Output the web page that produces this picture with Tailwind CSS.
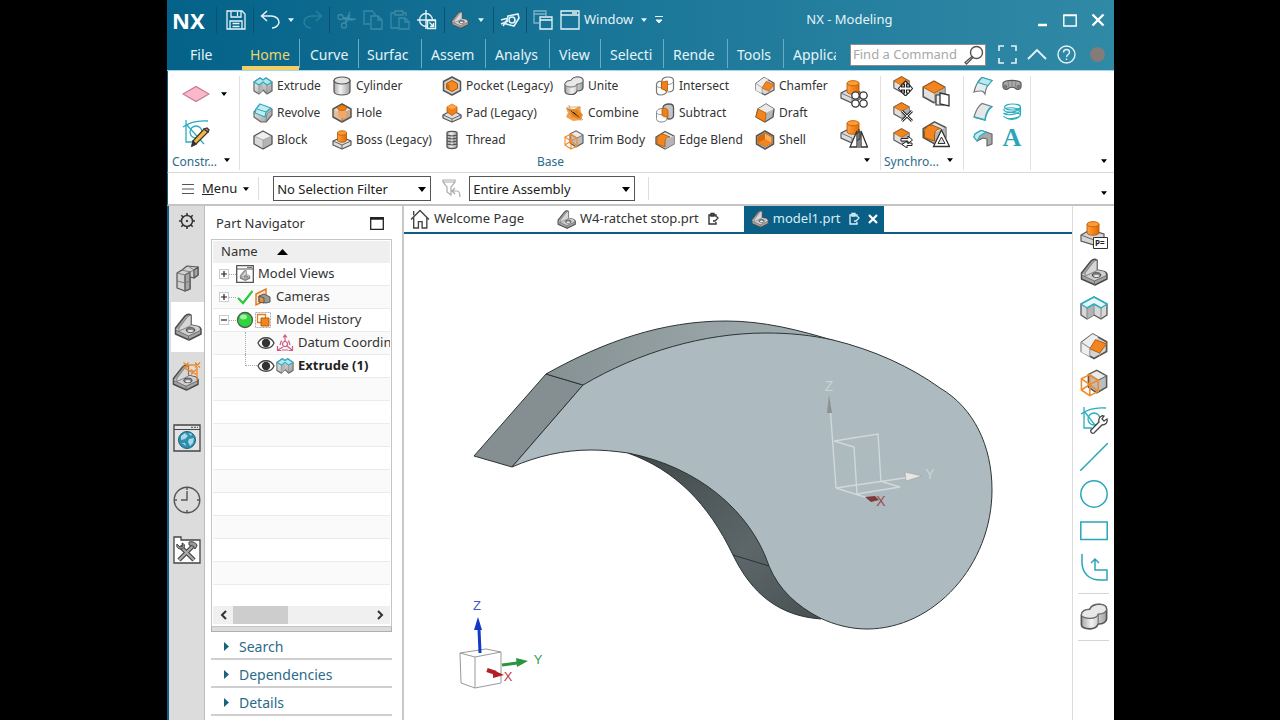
<!DOCTYPE html>
<html lang="en">
<head>
  <meta charset="UTF-8">
  <meta name="viewport" content="width=device-width, initial-scale=1.0">
  <title>NX - Modeling</title>
  <script src="https://cdn.jsdelivr.net/npm/@tailwindcss/browser@4"></script>
</head>
<body class="bg-black pl-[167px] pr-[166px] font-['Noto_Sans','Open_Sans',sans-serif] text-[#333]">

<!-- Icon sprite -->
<svg class="absolute size-0" aria-hidden="true">
  <defs>
    <linearGradient id="metal" x1="0" y1="0" x2="1" y2="1"><stop offset="0" stop-color="#f4f4f4"/><stop offset="1" stop-color="#9b9b9b"/></linearGradient>
    <linearGradient id="cyl" x1="0" x2="1"><stop offset="0" stop-color="#a8a8a8"/><stop offset=".4" stop-color="#f2f2f2"/><stop offset="1" stop-color="#a0a0a0"/></linearGradient>
    <linearGradient id="orange" x1="0" x2="1"><stop offset="0" stop-color="#ffa040"/><stop offset="1" stop-color="#e56a00"/></linearGradient>

    <symbol id="caret" viewBox="0 0 8 5"><path d="M0 0h8L4 5z" fill="currentColor"/></symbol>

    <symbol id="block" viewBox="0 0 20 20">
      <path d="M1 6l9-5 9 5-9 4z" fill="#efefef"/><path d="M1 6l9 4v9l-9-5z" fill="#d9d9d9"/><path d="M19 6l-9 4v9l9-5z" fill="#b4b4b4"/>
      <path d="M1 6l9 4 9-4M10 10v9" fill="none" stroke="#999" stroke-width=".8"/>
      <path d="M1 6l9-5 9 5v8l-9 5-9-5z" fill="none" stroke="#555" stroke-width="1.3" stroke-linejoin="round"/>
    </symbol>
    <symbol id="extrude" viewBox="0 0 20 20">
      <path d="M1 6l6-4 3 2 3-2 6 4v9l-5 3-4-4-4 4-5-3z" fill="url(#metal)" stroke="#666" stroke-width="1.200" stroke-linejoin="round"/>
      <path d="M6 9l4-2v7l-4 4z" fill="#b5b5b5"/><path d="M6 9v9M14 9v9" stroke="#888" stroke-width=".7"/>
      <path d="M1 6l6-4 3 2 3-2 6 4-5 3-4-3-4 3z" fill="#b8e4ec" stroke="#2badc2" stroke-width="1.300" stroke-linejoin="round"/>
    </symbol>
    <symbol id="revolve" viewBox="0 0 20 20">
      <path d="M1 9l5-6 13 3v6l-6 7H8l-7-5z" fill="url(#metal)" stroke="#666" stroke-width="1.200" stroke-linejoin="round"/>
      <path d="M7 1l11 4-5 4-1 5-10-4 1-4z" fill="#c5eaf0" stroke="#2badc2" stroke-width="1.300" stroke-linejoin="round"/>
      <path d="M4 6l9 3M13 9l5-4" stroke="#2badc2" fill="none"/><path d="M13 18l1-7 5-4" stroke="#888" fill="none"/>
    </symbol>
    <symbol id="cylinder" viewBox="0 0 20 20">
      <path d="M2 4.500v11C2 17.500 5.500 19 10 19s8-1.500 8-3.500v-11z" fill="url(#cyl)" stroke="#555" stroke-width="1.200"/>
      <ellipse cx="10" cy="4.500" rx="8" ry="3.500" fill="#e4e4e4" stroke="#555" stroke-width="1.200"/>
    </symbol>
    <symbol id="hole" viewBox="0 0 20 20">
      <path d="M1 6l9-5 9 5-9 4z" fill="#ddd"/><path d="M1 6l9 4v9l-9-5z" fill="#e2c09d"/><path d="M19 6l-9 4v9l9-5z" fill="#cfa681"/>
      <path d="M1 6l9-5 9 5v8l-9 5-9-5z" fill="none" stroke="#555" stroke-width="1.500" stroke-linejoin="round"/>
      <path d="M6 4v9c0 1.500 2 2.500 4 2.500s4-1 4-2.500V4z" fill="#f0a867"/><ellipse cx="10" cy="5" rx="4.500" ry="2.300" fill="#f47f10" stroke="#b85c00" stroke-width=".8"/>
      <path d="M10 15v4" stroke="#9b6a40" stroke-width=".8"/>
    </symbol>
    <symbol id="boss" viewBox="0 0 20 20">
      <path d="M1 11l9-4 9 4v4l-9 4-9-4z" fill="#dedede" stroke="#555" stroke-width="1.200" stroke-linejoin="round"/><path d="M1 11l9 4 9-4M10 15v4" fill="none" stroke="#666"/>
      <path d="M5.500 3v7c0 1.300 2 2.300 4.500 2.300s4.500-1 4.500-2.300V3z" fill="url(#orange)" stroke="#a85400" stroke-width=".8"/><ellipse cx="10" cy="3" rx="4.500" ry="2.200" fill="#ff9a35" stroke="#b85c00" stroke-width=".8"/>
    </symbol>
    <symbol id="pocket" viewBox="0 0 20 20">
      <path d="M10 1l8.500 4.500v9L10 19l-8.500-4.500v-9z" fill="#d2d2d2" stroke="#555" stroke-width="1.500" stroke-linejoin="round"/>
      <path d="M10 4.500l5.500 3v5L10 15.500l-5.500-3v-5z" fill="#f58a24" stroke="#a85400"/><path d="M4.500 7.500v5l3 1.500V9z" fill="#cf6a08"/>
    </symbol>
    <symbol id="pad" viewBox="0 0 20 20">
      <path d="M1 12l9-5 9 5v3l-9 4-9-4z" fill="#dedede" stroke="#555" stroke-width="1.300" stroke-linejoin="round"/><path d="M1 12l9 4 9-4M10 16v3" fill="none" stroke="#666"/>
      <path d="M5 4l5-3 5 3v5l-5 3.500L5 9z" fill="#f08018" stroke="#b85c00" stroke-width=".8"/><path d="M5 4l5 2.500L15 4l-5-3z" fill="#ffa44a"/>
    </symbol>
    <symbol id="thread" viewBox="0 0 20 20">
      <path d="M5 2.500C6 1 14 1 15 2.500V17c-1 2-9 2-10 0z" fill="url(#cyl)" stroke="#555" stroke-width="1.300"/>
      <path d="M5 5q5 2 10 0M5 8q5 2 10 0M5 11q5 2 10 0M5 14q5 2 10 0" fill="none" stroke="#444"/><path d="M8 5v9M12 5v9" stroke="#666" stroke-width=".8"/>
    </symbol>
    <symbol id="unite" viewBox="0 0 20 20">
      <path d="M1 8.500c0-2.500 3-4 6-4 1-2.500 4-3.500 7-3.500s5 1.500 5 3.500v7c0 2-2.500 3.500-6 3.500-1 2.500-3.500 3.500-6 3.500-3.500 0-6-1-6-3z" fill="url(#cyl)" stroke="#555" stroke-width="1.200"/>
      <path d="M1 8.500c0-2.500 3-4 6-4 1-2.500 4-3.500 7-3.500s5 1.500 5 3.500c0 2-2.500 3.500-6 3.500-.500 2-3 3-6 3s-6-1-6-2.500z" fill="#e8e8e8" stroke="#666" stroke-width=".9"/><path d="M13 8v7" stroke="#777" stroke-width=".9"/>
    </symbol>
    <symbol id="combine" viewBox="0 0 20 20">
      <path d="M2 5l8 1 6-3 1 6 2 3-2 5-8 1-7-4 2-4z" fill="#f6a04a"/><path d="M8 6l6 1 4 5-3 4-6-2-3-4z" fill="#ef7d0e"/>
      <path d="M2 5l8 4 9 8M3 12l14-8M5 2l3 13M3 4h12M14 7l3 11" stroke="#c99a5c" stroke-width=".8"/>
    </symbol>
    <symbol id="trim" viewBox="0 0 20 20">
      <path d="M6 4l6-3 7 4v8l-7 4-6-4z" fill="#bdbdbd" stroke="#555" stroke-width="1.100" stroke-linejoin="round"/><path d="M6 4l7 4 6-3-7-4z" fill="#ebebeb" stroke="#666" stroke-width=".8"/>
      <path d="M1 7l6-3 6 4v8l-6 3-6-4zM1 7l6 4 6-3M7 11v8M7 4v7l-6 4M7 11l6 5" fill="none" stroke="#f28a2a" stroke-width="1.100" stroke-linejoin="round"/>
    </symbol>
    <symbol id="intersect" viewBox="0 0 20 20">
      <path d="M1.500 9c0-2.500 2-4 5-4v7c2 1 5 2 5 4-1 2-3 3-6 3-2.500 0-4-1.500-4-3.500zM7 5c0-3 3-4 6-4 4 0 5.500 1.500 5.500 3.500v8c0 2-2 3.500-6 3.500" fill="#fff" stroke="#777" stroke-width="1.200"/>
      <path d="M1.500 9.500c1 3 8 3 11-1 3 0 5-1 6-3" fill="none" stroke="#888" stroke-width=".9"/>
      <path d="M6.500 6l6-1v10l-6-2z" fill="#f08018" stroke="#b85c00" stroke-width=".8"/>
    </symbol>
    <symbol id="subtract" viewBox="0 0 20 20">
      <path d="M8 5c0-3 3-4 6-4 3 0 4.500 1.500 4.500 3.500v8c0 2-2 3.500-5 3.500l-5-2z" fill="#c4c4c4" stroke="#555" stroke-width="1.300"/>
      <path d="M1.500 9.500C1.500 7 4 5.500 7 5.500s5 1 5 3v7c0 2-2 3.500-5.500 3.500s-5-1.500-5-3.500z" fill="#fff" fill-opacity=".8" stroke="#888"/><path d="M1.500 9.500c1 3 9 3 10.500-1" fill="none" stroke="#999"/>
      <path d="M7 5.500c3-1 6 0 6 3v6l-6-2z" fill="#f08018" stroke="#b85c00" stroke-width=".8"/>
    </symbol>
    <symbol id="blend" viewBox="0 0 20 20">
      <path d="M1 7l9-5.500L19 6v8l-9 5-9-5z" fill="#e2e2e2" stroke="#555" stroke-width="1.300" stroke-linejoin="round"/><path d="M10 10v9l9-5V6z" fill="#b4b4b4"/>
      <path d="M2 9c1-4 4-5 6-5l7 3c-3 0-5 2-5 5v5l-8-3z" fill="#f28520" stroke="#a85400" stroke-width=".8"/>
    </symbol>
    <symbol id="chamfer" viewBox="0 0 20 20">
      <path d="M1 7.500L9 1.500l10 5.500v7l-9 5-9-5z" fill="#d4d4d4" stroke="#555" stroke-width="1.200" stroke-linejoin="round"/><path d="M1 7.500L9 1.500l4 2-6 8v6l-6-3z" fill="#eee"/>
      <path d="M11 5.500l8 3-5 6.500-7-3z" fill="#f28520" stroke="#b85c00" stroke-width=".7"/><path d="M1 7.500l6 4v6M14 15v2" fill="none" stroke="#999" stroke-width=".8"/>
    </symbol>
    <symbol id="draft" viewBox="0 0 20 20">
      <path d="M3 6l8-5 8 5-1 8-8 5-9-5z" fill="#b5b5b5" stroke="#555" stroke-width="1.400" stroke-linejoin="round"/><path d="M3 6l8-5 8 5-8 4z" fill="#e9e9e9"/>
      <path d="M3 6l8 4-1 9-9-5z" fill="#f28520" stroke="#b85c00" stroke-width=".8"/>
    </symbol>
    <symbol id="shell" viewBox="0 0 20 20">
      <path d="M10 1l8.500 5v8L10 19l-8.500-5V6z" fill="#c0c0c0" stroke="#555" stroke-width="1.500" stroke-linejoin="round"/>
      <path d="M10 3L17 7v6l-7 3.500L3 13V7z" fill="#ffac5c" stroke="#a85400" stroke-width=".8"/><path d="M3 7l7-4v7l-7 3z" fill="#d26c0c"/><path d="M3 13l7-4 7 4-7 3.500z" fill="#f28520"/>
    </symbol>

    <symbol id="ocube" viewBox="0 0 20 20">
      <path d="M1 6l9-5 9 5v8l-9 5-9-5z" fill="#e0e0e0" stroke="#555" stroke-width="1.300" stroke-linejoin="round"/><path d="M10 10v9l9-5V6z" fill="#b0b0b0"/>
      <path d="M1 6l9-5 9 5-9 5z" fill="#f28520" stroke="#b85c00" stroke-width=".8"/>
    </symbol>
    <symbol id="stub" viewBox="0 0 28 28">
      <path d="M1 13l10-5 9 4v7l-8 4-11-5z" fill="#dcdcdc" stroke="#555" stroke-width="1.200"/><path d="M1 13l11 5v5" stroke="#777" fill="none"/>
      <path d="M7 3v9c1 3 11 3 12 0V3z" fill="url(#orange)" stroke="#a85400" stroke-width=".8"/><ellipse cx="13" cy="3.200" rx="6" ry="2.600" fill="#ff9a35" stroke="#b85c00" stroke-width=".8"/>
    </symbol>
    <symbol id="pattern" viewBox="0 0 28 28">
      <use href="#stub"/>
      <g fill="#fff" stroke="#333" stroke-width="1.300"><circle cx="15.500" cy="15.500" r="3.700"/><circle cx="23.500" cy="15.500" r="3.700"/><circle cx="15.500" cy="23.500" r="3.700"/><circle cx="23.500" cy="23.500" r="3.700"/></g>
    </symbol>
    <symbol id="mirror" viewBox="0 0 28 28">
      <use href="#stub"/>
      <path d="M17 11v16h-7zM21 11v16h6.500z" fill="#fff" stroke="#333" stroke-width="1.300"/><path d="M19 9v19" stroke="#333" stroke-width="1.200"/>
    </symbol>
    <symbol id="moveface" viewBox="0 0 20 20">
      <use href="#ocube" width="17" height="17"/><path d="M12.500 5l3 3h-2v3h3V9l3 3.500-3 3.500v-2h-3v3h2l-3 3-3-3h2v-3h-3v2l-3-3.500 3-3.500v2h3V8h-2z" fill="#fff" stroke="#222" stroke-width="1.100"/>
    </symbol>
    <symbol id="delface" viewBox="0 0 20 20">
      <use href="#ocube" width="17" height="17"/><path d="M9 9l10 10M19 9L9 19" stroke="#333" stroke-width="2.800"/><path d="M9 9l10 10M19 9L9 19" stroke="#ddd" stroke-width="1"/>
    </symbol>
    <symbol id="repface" viewBox="0 0 20 20">
      <use href="#ocube" width="17" height="17"/><path d="M8 10.500h7V8l4.500 4-4.500 3.500V13H8zM19 15h-5v-2l-5 3.500 5 3.500v-2.500h5z" fill="#fff" stroke="#222"/>
    </symbol>
    <symbol id="offset" viewBox="0 0 28 28">
      <use href="#ocube" width="24" height="24"/><path d="M14 15h8v10h-8z" fill="#eee" stroke="#333" stroke-width="1.200"/><path d="M18 13l9 2v11l-9-2z" fill="#fff" stroke="#333" stroke-width="1.300"/>
    </symbol>
    <symbol id="resize" viewBox="0 0 28 28">
      <use href="#blend" width="25" height="25"/><path d="M19.500 10l8 16.500h-16z" fill="#fff" stroke="#333" stroke-width="1.300"/><path d="M19.500 17l3.500 6.500h-7z" fill="#ddd" stroke="#333"/>
    </symbol>
    <symbol id="surf1" viewBox="0 0 20 20">
      <path d="M1 16C3 8 5 4 9 1.500l10 3C15 7 13 11 12 18c-1-2-2-3-4-3s-4 0-7 1z" fill="#e4eef0" stroke="#777" stroke-width="1.200"/><path d="M9 1.500l10 3-4 5-10-3z" fill="#bfe6ee" stroke="#2badc2" stroke-width="1.200"/>
    </symbol>
    <symbol id="surf2" viewBox="0 0 20 20">
      <path d="M1 15C3 8 5 4 9 1.500l10 3C15 7 13 11 12 18z" fill="#e6e6e6" stroke="#777" stroke-width="1.200"/><path d="M1 15l11 3c1-7 3-11 7-13.500" fill="none" stroke="#2badc2" stroke-width="1.500"/>
    </symbol>
    <symbol id="sweep" viewBox="0 0 20 20">
      <path d="M2 6l6-3.500L19 6v10l-5 2v-7l-4-1-6 3-3-4z" fill="#a9a9a9" stroke="#666" stroke-width="1.200" stroke-linejoin="round"/><path d="M1 9l1-3 6-3.500 5 1.500-6 4-3 5z" fill="#c5eaf0" stroke="#2badc2" stroke-width="1.200"/>
    </symbol>
    <symbol id="tube" viewBox="0 0 20 20">
      <path d="M1 11V7c2-3.500 16-3.500 18 0v4c-1 3-4 3-6 1-2-1-4-1-6 0-2 2-5 2-6-1z" fill="#aaa" stroke="#555" stroke-width="1.200"/><path d="M6 5.500l1 6M10 5v6M14 5.500l-1 6" stroke="#777" stroke-width=".8"/><ellipse cx="3.500" cy="11" rx="2" ry="2.500" fill="#777"/><ellipse cx="16.500" cy="11" rx="2" ry="2.500" fill="#777"/>
    </symbol>
    <symbol id="helix" viewBox="0 0 20 20">
      <g fill="none" stroke="#2badc2" stroke-width="1.200"><ellipse cx="10.500" cy="5" rx="8" ry="3"/><path d="M18.500 5c0 5-14 7-17 3M18.500 5v7c0 5-14 6-17 2M1.500 8c2-3 10-3 17 0M18 9c-3 4-14 5-16.500 2M18 14c-3 4-10 4-14 2M2 12c3-2 12-2 16 0"/></g>
    </symbol>

    <symbol id="part" viewBox="0 0 28 28">
      <path d="M1.500 15L11 3q3-3 6-1v10l7 1.500q3.500 1.500 3 4.500v3L15 27 1.500 21z" fill="#a4a4a4" stroke="#4c4c4c" stroke-width="1.500" stroke-linejoin="round"/>
      <path d="M1.500 16.500L17 12l7 1.500q3 2 1 4.500l-11 5z" fill="#cfcfcf"/>
      <path d="M5 15l8-10.500Q15 2 17 2v10.500l-4 2-8 3.500z" fill="#d6d6d6" stroke="#707070" stroke-width=".8"/>
      <path d="M1.500 17L14.500 23v4M14.500 23L26.500 17.500" fill="none" stroke="#6a6a6a" stroke-width=".9"/>
      <ellipse cx="16.500" cy="17" rx="4.300" ry="2.300" fill="#8a8a8a" stroke="#444"/><ellipse cx="16.500" cy="18" rx="2.800" ry="1.100" fill="#eee"/>
    </symbol>
    <symbol id="eye" viewBox="0 0 18 14"><path d="M1 7c3-7 13-7 16 0-3 7-13 7-16 0z" fill="#fff" stroke="#444" stroke-width="1.300"/><circle cx="9" cy="7" r="4.200" fill="#333"/></symbol>
    <symbol id="sheet" viewBox="0 0 12 14"><path d="M9 10v2H2V3h7v2" fill="none" stroke="currentColor" stroke-width="1.400"/><path d="M4 1.500h3V4H4zM6 9h2l3-3-1.500-1.500" fill="none" stroke="currentColor" stroke-width="1.300"/></symbol>
  </defs>
</svg>

<div class="flex h-screen flex-col overflow-hidden bg-white">

  <header class="shrink-0 border-b border-[#a5d8ee] bg-linear-to-r from-[#046289] via-[#1b7799] to-[#3089a5] text-[#e4f4f8]">
    <!-- Title bar -->
    <div class="flex h-[39px] items-center pl-[5px] pr-[9px]">
      <span class="w-[38px] text-[22px] leading-none font-bold text-white">NX</span>
      <span class="ml-[6px] h-[26px] w-px bg-[#07506f]"></span>
      <button class="ml-[9px]" aria-label="Save"><svg class="size-5" viewBox="0 0 20 20" fill="none" stroke="currentColor" stroke-width="1.300"><path d="M1 1h15l3 3v15H1zM5 1v6h10V1M11.500 2v4M4 19v-8h12v8M6.500 13.500h7M6.500 16.500h7"/></svg></button>
      <span class="ml-[7px] h-[26px] w-px bg-[#07506f]"></span>
      <button class="ml-[6px]" aria-label="Undo"><svg class="size-5" viewBox="0 0 20 20" fill="none" stroke="currentColor" stroke-width="1.500"><path d="M7 1L1.500 6 7 11M2 6h9c5 0 8 3 8 6s-3 6-7 6"/></svg></button>
      <button class="ml-2" aria-label="Undo list"><svg class="h-1 w-[6px]"><use href="#caret"/></svg></button>
      <button class="ml-[9px] text-[#2a7f9d]" aria-label="Redo"><svg class="size-5" viewBox="0 0 20 20" fill="none" stroke="currentColor" stroke-width="1.500"><path d="M13 1l5.500 5L13 11M18 6H9c-5 0-8 3-8 6s3 6 7 6"/></svg></button>
      <span class="ml-[6px] h-[26px] w-px bg-[#07506f]"></span>
      <button class="ml-[7px] text-[#3b8aa7]" aria-label="Cut"><svg class="size-5" viewBox="0 0 20 20" fill="none" stroke="currentColor" stroke-width="1.300"><circle cx="3.500" cy="7" r="2.500"/><circle cx="7" cy="15.500" r="2.500"/><path d="M6 7.500l13 2M8 13L13 2M6 8l10 2-10-1M9 13l4-8"/></svg></button>
      <button class="ml-[6px] text-[#3b8aa7]" aria-label="Copy"><svg class="size-5" viewBox="0 0 20 20" fill="none" stroke="currentColor" stroke-width="1.300"><path d="M7 14H1V1h8l3 3v2M8 6h7l4 4v9H8zM15 6v4h4"/></svg></button>
      <button class="ml-[7px] text-[#3b8aa7]" aria-label="Paste"><svg class="size-5" viewBox="0 0 20 20" fill="none" stroke="currentColor" stroke-width="1.300"><path d="M8 18H1V3h4M13 3h3v3M5 1h8v4H5zM9 8h6l4 4v7H9zM15 8v4h4"/></svg></button>
      <button class="ml-[7px]" aria-label="Snap"><svg class="size-5" viewBox="0 0 20 20" fill="none" stroke="currentColor" stroke-width="1.400"><circle cx="9" cy="10" r="6.500"/><path d="M9 0v19M0 10h19"/><path d="M10.500 10.500h8v8h-8z" fill="#0f6c8f"/><path d="M12.500 12.500l4 4M16.500 13v3.500H13"/></svg></button>
      <span class="ml-[7px] h-[26px] w-px bg-[#07506f]"></span>
      <button class="ml-[6px]" aria-label="Part"><svg class="size-[18px]"><use href="#part"/></svg></button>
      <button class="ml-[9px]" aria-label="Part list"><svg class="h-1 w-[6px]"><use href="#caret"/></svg></button>
      <span class="ml-[9px] h-[26px] w-px bg-[#07506f]"></span>
      <button class="ml-[6px]" aria-label="Orient"><svg class="size-5" viewBox="0 0 20 20" fill="none" stroke="currentColor" stroke-width="1.600"><path d="M1 10l7-2M1 14l7-3M8 6l10-2 1 4-5 8-8-2z"/><circle cx="12" cy="10" r="3"/><path d="M3 16l4-6"/></svg></button>
      <span class="ml-[6px] h-[26px] w-px bg-[#07506f]"></span>
      <button class="ml-[6px]" aria-label="Cascade"><svg class="size-5" viewBox="0 0 20 20" fill="none" stroke="currentColor" stroke-width="1.300"><path d="M6 13H1V1h12v5M1 4h12" opacity=".5"/><path d="M7 7h12v12H7zM7 10h12"/></svg></button>
      <button class="ml-[7px] flex items-center gap-1 text-[13px]"><svg class="size-5" viewBox="0 0 20 20" fill="none" stroke="currentColor" stroke-width="1.300"><path d="M1 1h18v18H1zM1 5h18M12 3h5"/></svg>Window<svg class="ml-1 h-1 w-[6px]"><use href="#caret"/></svg></button>
      <button class="ml-2" aria-label="Customize"><svg class="h-2 w-2" viewBox="0 0 8 8"><path d="M0 .5h8M1 4h6L4 7z" stroke="currentColor" fill="currentColor"/></svg></button>
      <h1 class="ml-[143px] text-[13px] whitespace-nowrap">NX - Modeling</h1>
      <div class="ml-auto flex items-center gap-[14px] text-white">
        <button aria-label="Minimize"><svg class="size-[14px]" viewBox="0 0 14 14"><path d="M3 12h9" stroke="currentColor" stroke-width="2.500"/></svg></button>
        <button aria-label="Maximize"><svg class="size-[14px]" viewBox="0 0 14 14"><path d="M.8 2h12.400v11H.8zM.8 2.500h12.400" fill="none" stroke="currentColor" stroke-width="1.400"/></svg></button>
        <button aria-label="Close"><svg class="size-[14px]" viewBox="0 0 14 14"><path d="M1.500 1.500l11 11M12.500 1.500l-11 11" stroke="currentColor" stroke-width="2.400"/></svg></button>
      </div>
    </div>
    <!-- Ribbon tabs -->
    <div class="flex h-[31px] items-stretch text-[14px]">
      <nav class="flex items-stretch">
        <a href="#" class="w-[75px] pl-[23px] leading-[31px]">File</a>
        <a href="#" class="w-[57px] border-b-4 border-[#f3cf63] pl-2 leading-[31px] text-[#ecd66a]">Home</a>
        <a href="#" class="mb-[2px] w-[60px] border-r border-l border-[#6aacc3] pl-[10px] leading-[31px]">Curve</a>
        <a href="#" class="mb-[2px] w-[63px] border-r border-[#6aacc3] pl-2 leading-[31px]"><span class="block w-[43px] overflow-hidden">Surfac</span></a>
        <a href="#" class="mb-[2px] w-[64px] border-r border-[#6aacc3] pl-[9px] leading-[31px]">Assem</a>
        <a href="#" class="mb-[2px] w-[64px] border-r border-[#6aacc3] pl-[9px] leading-[31px]">Analys</a>
        <a href="#" class="mb-[2px] w-[51px] border-r border-[#6aacc3] pl-[9px] leading-[31px]">View</a>
        <a href="#" class="mb-[2px] w-[63px] border-r border-[#6aacc3] pl-[9px] leading-[31px]">Selecti</a>
        <a href="#" class="mb-[2px] w-[64px] border-r border-[#6aacc3] pl-[9px] leading-[31px]">Rende</a>
        <a href="#" class="mb-[2px] w-[56px] border-r border-[#6aacc3] pl-[9px] leading-[31px]">Tools</a>
        <a href="#" class="w-[58px] pl-[9px] leading-[31px]"><span class="block w-[43px] overflow-hidden">Applica</span></a>
      </nav>
      <div class="ml-auto flex items-center pr-[9px]">
        <label class="flex h-[22px] w-[136px] items-center border border-[#8d8d8d] bg-white pl-[2px]">
          <input type="text" placeholder="Find a Command" aria-label="Find a Command" class="min-w-0 flex-1 text-[13px] text-[#333] outline-none placeholder:text-[#a8a8a8]">
          <svg class="mr-[1px] size-5" viewBox="0 0 20 20" fill="none" stroke="#555"><circle cx="12.500" cy="7.500" r="6" stroke-width="1.400"/><path d="M8 11.500l1 1L2.500 19 1 17.500z" stroke-width="1.300"/></svg>
        </label>
        <button class="ml-3" aria-label="Full screen"><svg class="size-[19px]" viewBox="0 0 19 19" fill="none" stroke="currentColor" stroke-width="1.600"><path d="M1 6V1h5M13 1h5v5M18 13v5h-5M6 18H1v-5"/></svg></button>
        <button class="ml-[10px]" aria-label="Collapse ribbon"><svg class="size-5" viewBox="0 0 20 20" fill="none" stroke="currentColor" stroke-width="1.800"><path d="M1 14l9-9 9 9"/></svg></button>
        <button class="ml-[10px]" aria-label="Help"><svg class="size-[19px]" viewBox="0 0 19 19" fill="none" stroke="currentColor" stroke-width="1.400"><circle cx="9.500" cy="9.500" r="8.500"/><path d="M6.500 7.500c0-4 6-4 6 0 0 2-3 2-3 4.500M9.500 13.500v1.500"/></svg></button>
        <button class="ml-[14px] size-[15px] rounded-full bg-[#857b78]" aria-label="Account"></button>
      </div>
    </div>
  </header>

  <!-- Ribbon -->
  <section class="flex h-[102px] shrink-0 border-b border-[#dadada] border-l border-l-[#0b5f83] pt-[5px] pb-[2px] text-[12px] leading-4">
    <div class="flex w-[72px] flex-col border-r border-[#e0e0e0] pt-1 pl-1">
      <div class="flex items-center pl-[10px]">
        <button aria-label="Datum Plane"><svg class="h-7 w-[28px]" viewBox="0 0 28 28"><path d="M1 14l13-7.500L27 14l-13 7.500z" fill="#f8b9cb" stroke="#c9788f" stroke-width="1.200"/></svg></button>
        <button class="ml-[11px]" aria-label="Datum list"><svg class="h-1 w-[6px] text-black"><use href="#caret"/></svg></button>
      </div>
      <button class="mt-[11px] ml-[10px] size-7" aria-label="Sketch"><svg class="size-7" viewBox="0 0 28 28" fill="none" stroke="#2badc2" stroke-width="1.300"><path d="M1 8C8 3 15 1 26 2M4 1v22h8M4 5l18 20"/><circle cx="14" cy="13" r="6"/><path d="M11 22l11-12 4 3-12 12-4 2z" fill="#f6b73c" stroke="#333" stroke-width="1.200"/><path d="M22 10l3-1 2 2-1 2z" fill="#e88" stroke="#333"/><path d="M10 27l1-5 3 3z" fill="#333" stroke="#333"/></svg></button>
      <button class="mt-auto flex items-start text-[#2b6a8a]">Constr...<svg class="mt-1 ml-[7px] h-1 w-[6px] text-black"><use href="#caret"/></svg></button>
    </div>

    <div class="flex w-[641px] flex-col border-r border-[#e0e0e0] pl-[13px]">
      <div class="flex flex-1">
        <div class="flex w-[79px] flex-col gap-[7px] whitespace-nowrap">
          <button class="flex h-5 items-center gap-1"><svg class="size-5"><use href="#extrude"/></svg>Extrude</button>
          <button class="flex h-5 items-center gap-1"><svg class="size-5"><use href="#revolve"/></svg>Revolve</button>
          <button class="flex h-5 items-center gap-1"><svg class="size-5"><use href="#block"/></svg>Block</button>
        </div>
        <div class="flex w-[110px] flex-col gap-[7px] whitespace-nowrap">
          <button class="flex h-5 items-center gap-1"><svg class="size-5"><use href="#cylinder"/></svg>Cylinder</button>
          <button class="flex h-5 items-center gap-1"><svg class="size-5"><use href="#hole"/></svg>Hole</button>
          <button class="flex h-5 items-center gap-1"><svg class="size-5"><use href="#boss"/></svg>Boss (Legacy)</button>
        </div>
        <div class="flex w-[122px] flex-col gap-[7px] whitespace-nowrap">
          <button class="flex h-5 items-center gap-1"><svg class="size-5"><use href="#pocket"/></svg>Pocket (Legacy)</button>
          <button class="flex h-5 items-center gap-1"><svg class="size-5"><use href="#pad"/></svg>Pad (Legacy)</button>
          <button class="flex h-5 items-center gap-1"><svg class="size-5"><use href="#thread"/></svg>Thread</button>
        </div>
        <div class="flex w-[91px] flex-col gap-[7px] whitespace-nowrap">
          <button class="flex h-5 items-center gap-1"><svg class="size-5"><use href="#unite"/></svg>Unite</button>
          <button class="flex h-5 items-center gap-1"><svg class="size-5"><use href="#combine"/></svg>Combine</button>
          <button class="flex h-5 items-center gap-1"><svg class="size-5"><use href="#trim"/></svg>Trim Body</button>
        </div>
        <div class="flex w-[100px] flex-col gap-[7px] whitespace-nowrap">
          <button class="flex h-5 items-center gap-1"><svg class="size-5"><use href="#intersect"/></svg>Intersect</button>
          <button class="flex h-5 items-center gap-1"><svg class="size-5"><use href="#subtract"/></svg>Subtract</button>
          <button class="flex h-5 items-center gap-1"><svg class="size-5"><use href="#blend"/></svg>Edge Blend</button>
        </div>
        <div class="flex w-[85px] flex-col gap-[7px] whitespace-nowrap">
          <button class="flex h-5 items-center gap-1"><svg class="size-5"><use href="#chamfer"/></svg>Chamfer</button>
          <button class="flex h-5 items-center gap-1"><svg class="size-5"><use href="#draft"/></svg>Draft</button>
          <button class="flex h-5 items-center gap-1"><svg class="size-5"><use href="#shell"/></svg>Shell</button>
        </div>
        <div class="flex flex-col gap-3 pt-1">
          <button class="size-7" aria-label="Pattern Feature"><svg class="size-7"><use href="#pattern"/></svg></button>
          <button class="size-7" aria-label="Mirror Feature"><svg class="size-7"><use href="#mirror"/></svg></button>
        </div>
      </div>
      <div class="flex items-start pr-[10px] text-[#2b6a8a]">
        <span class="ml-[284px]">Base</span>
        <button class="ml-auto flex" aria-label="Base options"><svg class="mt-1 h-1 w-[6px] text-black"><use href="#caret"/></svg></button>
      </div>
    </div>

    <div class="flex w-[83px] flex-col border-r border-[#e0e0e0] pl-[3px]">
      <div class="flex flex-1 gap-[9px] pl-[9px]">
        <div class="flex flex-col gap-[6px]">
          <button class="size-5" aria-label="Move Face"><svg class="size-5"><use href="#moveface"/></svg></button>
          <button class="size-5" aria-label="Delete Face"><svg class="size-5"><use href="#delface"/></svg></button>
          <button class="size-5" aria-label="Replace Face"><svg class="size-5"><use href="#repface"/></svg></button>
        </div>
        <div class="flex flex-col gap-3 pt-1">
          <button class="size-7" aria-label="Offset Region"><svg class="size-7"><use href="#offset"/></svg></button>
          <button class="size-7" aria-label="Resize Blend"><svg class="size-7"><use href="#resize"/></svg></button>
        </div>
      </div>
      <button class="flex items-start text-[#2b6a8a]">Synchro...<svg class="mt-1 ml-2 h-1 w-[6px] text-black"><use href="#caret"/></svg></button>
    </div>

    <div class="grid w-[67px] grid-cols-[20px_20px] content-start gap-x-[9px] gap-y-[6px] border-r border-[#e0e0e0] pl-[9px]">
      <button class="size-5" aria-label="Through Curves"><svg class="size-5"><use href="#surf1"/></svg></button>
      <button class="size-5" aria-label="Tube"><svg class="size-5"><use href="#tube"/></svg></button>
      <button class="size-5" aria-label="Ruled"><svg class="size-5"><use href="#surf2"/></svg></button>
      <button class="size-5" aria-label="Helix"><svg class="size-5"><use href="#helix"/></svg></button>
      <button class="size-5" aria-label="Sweep"><svg class="size-5"><use href="#sweep"/></svg></button>
      <button class="size-5 font-['Liberation_Serif',serif] text-[26px] leading-5 font-bold text-[#2ba5ba]" aria-label="Text">A</button>
    </div>
    <button class="mt-auto mr-[7px] mb-[7px] ml-auto" aria-label="Ribbon options"><svg class="h-1 w-[6px] text-black"><use href="#caret"/></svg></button>
  </section>

  <!-- Selection bar -->
  <section class="flex h-[33px] shrink-0 items-center border-b-2 border-l border-[#c4c4c4] border-l-[#0b5f83] text-[13px] text-[#222]">
    <button class="flex items-center pl-[14px]"><svg class="h-3 w-3" viewBox="0 0 12 12"><path d="M0 1.500h12M0 6h12M0 10.500h12" stroke="#555"/></svg><span class="ml-2"><u>M</u>enu</span><svg class="ml-[6px] h-1 w-[6px] text-black"><use href="#caret"/></svg></button>
    <span class="ml-[9px] h-[23px] w-px bg-[#dedede]"></span>
    <div class="relative ml-[14px]">
      <select aria-label="Selection filter" class="h-[25px] w-[158px] appearance-none border border-[#555] bg-white pl-[3px] leading-[22px]"><option>No Selection Filter</option></select>
      <svg class="pointer-events-none absolute top-[11px] right-[5px] h-[5px] w-2 text-black"><use href="#caret"/></svg>
    </div>
    <button class="ml-[11px]" aria-label="Reset filter"><svg class="size-[19px]" viewBox="0 0 19 19" fill="none" stroke="#aaa" stroke-width="1.200"><path d="M1 1h12v2L9 8v8l-4-3V8L1 3zM1 3h12M13 9l-3 3 3 3M10 12h5c3 0 3 4 3 6"/></svg></button>
    <div class="relative ml-2">
      <select aria-label="Selection scope" class="h-[25px] w-[166px] appearance-none border border-[#555] bg-white pl-[3px] leading-[22px]"><option>Entire Assembly</option></select>
      <svg class="pointer-events-none absolute top-[11px] right-[5px] h-[5px] w-2 text-black"><use href="#caret"/></svg>
    </div>
    <span class="ml-[13px] h-[23px] w-px bg-[#dedede]"></span>
    <button class="mt-2 mr-[7px] ml-auto" aria-label="Border bar options"><svg class="h-1 w-[6px] text-black"><use href="#caret"/></svg></button>
  </section>

  <main class="flex min-h-0 flex-1">
    <!-- Resource bar -->
    <aside class="flex w-[38px] shrink-0 flex-col border-r border-l-2 border-[#bdbdbd] border-l-[#0b5f83] bg-[#dcdcdc]">
      <button class="flex h-[29px] items-center justify-center" aria-label="Settings"><svg class="size-4" viewBox="0 0 16 16" fill="none" stroke="#333"><circle cx="8" cy="8" r="5.500" stroke-width="1.500"/><path d="M8 0v3M8 13v3M0 8h3M13 8h3M2.300 2.300l2 2M11.700 11.700l2 2M2.300 13.700l2-2M11.700 4.300l2-2" stroke-width="1.600"/><circle cx="8" cy="8" r=".8" fill="#333"/></svg></button>
      <button class="mt-[19px] flex h-12 items-center justify-center" aria-label="Assembly Navigator"><svg class="size-7" viewBox="0 0 28 28" stroke="#555" stroke-width="1.200" stroke-linejoin="round"><path d="M4 9l5-3 5-4 11 1v8l-4 3-4-1v12l-5 2-8-3z" fill="#d0d0d0"/><path d="M12 11l5-3v17l-5 2z" fill="#a6a6a6"/><path d="M21 6l4-3v8l-4 3z" fill="#a6a6a6"/><path d="M4 9l8 2 5-3 4-2M4 17l8 2 5-2M12 11v16M21 6v8M9 6l8 2M15 2l6 4" fill="none" stroke="#777" stroke-width=".9"/></svg></button>
      <button class="ml-[2px] flex h-[50px] items-center justify-center bg-white" aria-label="Part Navigator"><svg class="size-7"><use href="#part"/></svg></button>
      <button class="flex h-12 items-center justify-center" aria-label="Reuse"><svg class="size-[30px]" viewBox="0 0 30 30"><use href="#part" y="3" width="27" height="27"/><path d="M14 4h11M25 6v13M14 5v3l8 4" fill="none" stroke="#f28a2a" stroke-width="1.400"/><path d="M11.500 1.500l5 5m0-5l-5 5M23 1.500l5 5m0-5l-5 5M19 8.500l5 5m0-5l-5 5" stroke="#e8862f" stroke-width="1.300"/></svg></button>
      <button class="mt-[7px] flex h-[62px] items-center justify-center" aria-label="Web Browser"><svg class="size-7" viewBox="0 0 28 28"><path d="M1 1h26v26H1z" fill="#e4e4e4" stroke="#444" stroke-width="1.300"/><path d="M1 5.500h26" stroke="#444"/><path d="M18 3.300h7" stroke="#444" stroke-dasharray="2 1"/><circle cx="14" cy="16" r="8.500" fill="#2f8fae" stroke="#1d6480"/><path d="M8 12l4-3 3 3-3 3-4 1zM16 15l5-1-1 5-3 3-2-4zM15 9l4 1-1 2zM9 19l3 0 1 3z" fill="#a7dbe8"/></svg></button>
      <button class="flex h-[62px] items-center justify-center" aria-label="History"><svg class="size-7" viewBox="0 0 28 28" fill="none" stroke="#555" stroke-width="1.400"><circle cx="14" cy="14" r="12.800"/><path d="M14 5v9H8M14 1v3M14 24v3M1 14h3M24 14h3"/></svg></button>
      <button class="flex h-[38px] items-center justify-center" aria-label="Roles"><svg class="size-7" viewBox="0 0 28 28"><path d="M1 5V1h7v3h19v23H1z" fill="#fff" stroke="#444" stroke-width="1.300"/><path d="M7 10l14 14M20 10L6 24" stroke="#444" stroke-width="4.500"/><path d="M7 10l14 14M20 10L6 24" stroke="#aaa" stroke-width="2.200"/><path d="M4 8l3 3 3-1-1-3c4 1 3 6-1 6-3 0-5-2-4-5zM16 6c4-1 8 1 8 4l-2 3-2-3-4-1z" fill="#999" stroke="#444"/></svg></button>
    </aside>

    <!-- Part Navigator -->
    <aside class="flex w-[198px] shrink-0 flex-col border-r border-[#c8c8c8] pr-[10px] pl-[6px] text-[13px]">
      <div class="flex h-[33px] shrink-0 items-center pt-[2px] pr-2 pl-[5px]">
        <h2 class="flex-1">Part Navigator</h2>
        <button aria-label="Undock"><svg class="h-[13px] w-[14px]" viewBox="0 0 14 13"><path d="M.7.700h12.600v11.600H.7zM0 2h14" fill="none" stroke="#222" stroke-width="1.300"/></svg></button>
      </div>
      <div class="flex min-h-0 flex-1 flex-col border border-[#c4c4c4] px-[1px] pt-[1px]">
        <button class="flex h-[22px] shrink-0 items-center bg-[#efefef] pl-2">Name<svg class="ml-[19px] h-[6px] w-[11px]" viewBox="0 0 11 6"><path d="M0 6h11L5.500 0z"/></svg></button>
        <ul class="min-h-0 flex-1 overflow-hidden whitespace-nowrap">
          <li class="flex h-[23px] items-center border-b border-[#ebebeb] pl-[6px]"><button class="flex size-[10px] items-center justify-center border border-[#ccc] bg-white" aria-label="Expand Model Views"><svg class="size-[6px]" viewBox="0 0 6 6"><path d="M0 3h6M3 0v6" stroke="#222" stroke-width="1.200"/></svg></button><span class="w-[7px] border-t border-dotted border-[#aaa]"></span>
            <svg class="size-[18px]" viewBox="0 0 18 18"><path d="M.7.700h16.600v16.600H.7z" fill="#fff" stroke="#555" stroke-width="1.300"/><path d="M1 4h16M11 2.300h5" stroke="#555"/><use href="#part" x="3.500" y="5" width="11" height="11"/></svg><span class="ml-[4px]">Model Views</span></li>
          <li class="flex h-[23px] items-center border-b border-[#ebebeb] bg-[#fafafa] pl-[6px]"><button class="flex size-[10px] items-center justify-center border border-[#ccc] bg-white" aria-label="Expand Cameras"><svg class="size-[6px]" viewBox="0 0 6 6"><path d="M0 3h6M3 0v6" stroke="#222" stroke-width="1.200"/></svg></button><span class="w-[7px] border-t border-dotted border-[#aaa]"></span>
            <svg class="h-[18px] w-[18px]" viewBox="0 0 18 18"><path d="M2 10l5 5L16.500 3" fill="none" stroke="#2fc83a" stroke-width="2.200"/></svg><svg class="size-[18px]" viewBox="0 0 18 18"><path d="M2 6l10-5v11L2 17z" fill="#fbe3cc" stroke="#e07b20" stroke-width="1.400"/><path d="M5 8l5-2 6 3v5l-4 1-7-1z" fill="#999" stroke="#555"/><path d="M5 8l5 2v5l-5-1z" stroke="#555" fill="#e8913c"/></svg><span class="ml-[4px]">Cameras</span></li>
          <li class="flex h-[23px] items-center border-b border-[#ebebeb] pl-[6px]"><button class="flex size-[10px] items-center justify-center border border-[#ccc] bg-white" aria-label="Collapse Model History"><svg class="size-[6px]" viewBox="0 0 6 6"><path d="M0 3h6" stroke="#222" stroke-width="1.200"/></svg></button><span class="w-[7px] border-t border-dotted border-[#aaa]"></span>
            <svg class="size-[18px]" viewBox="0 0 18 18"><circle cx="9" cy="9" r="7.500" fill="#2fd43c" stroke="#555" stroke-width="1.300"/><ellipse cx="7.500" cy="6" rx="3.500" ry="2.500" fill="#9df2a0"/></svg><svg class="size-[18px]" viewBox="0 0 18 18"><path d="M1.500 1.500h15v15h-15z" fill="none" stroke="#aaa" stroke-dasharray="2 1"/><path d="M3.500 3.500h8v8h-8z" fill="#fff" stroke="#e07b20" stroke-width="1.300"/><path d="M7 7h8v8H7z" fill="#f28520" stroke="#b85c00"/></svg><span class="ml-[4px]">Model History</span></li>
          <li class="flex h-[23px] items-center border-b border-[#ebebeb] bg-[#fafafa] pl-[32px]"><span class="h-full w-3 shrink-0 border-l border-dotted border-[#aaa]"></span>
            <svg class="h-[14px] w-[18px] shrink-0"><use href="#eye"/></svg><svg class="mx-[1px] size-[18px] shrink-0" viewBox="0 0 18 18" fill="none" stroke="#cf5d82" stroke-width="1.200"><circle cx="9" cy="10" r="2.500"/><path d="M9 1v7M7 13l-5 3M11 12l5 4M7 3.500L9 1l2 2.500M1.500 12v4.500h4M16.500 12v4.500h-4M5.500 6.500L4 11M12.500 6.500L14 11M6 16h6"/></svg><span class="ml-[3px] min-w-0 overflow-hidden">Datum Coordinate</span></li>
          <li class="flex h-[23px] items-center border-b border-[#ebebeb] pl-[32px] font-bold text-[#222]"><span class="-mt-3 h-3 w-3 border-b border-l border-dotted border-[#aaa]"></span>
            <svg class="h-[14px] w-[18px]"><use href="#eye"/></svg><svg class="mx-[1px] size-[18px]"><use href="#extrude"/></svg><span class="ml-[3px]">Extrude (1)</span></li>
          <li class="h-[23px] border-b border-[#ebebeb] bg-[#fafafa]"></li>
          <li class="h-[23px] border-b border-[#ebebeb]"></li>
          <li class="h-[23px] border-b border-[#ebebeb] bg-[#fafafa]"></li>
          <li class="h-[23px] border-b border-[#ebebeb]"></li>
          <li class="h-[23px] border-b border-[#ebebeb] bg-[#fafafa]"></li>
          <li class="h-[23px] border-b border-[#ebebeb]"></li>
          <li class="h-[23px] border-b border-[#ebebeb] bg-[#fafafa]"></li>
          <li class="h-[23px] border-b border-[#ebebeb]"></li>
          <li class="h-[23px] border-b border-[#ebebeb] bg-[#fafafa]"></li>
        </ul>
        <div class="mb-[2px] flex h-[18px] shrink-0 items-center bg-[#f0f0f0]">
          <button class="flex w-5 justify-center" aria-label="Scroll left"><svg class="h-[10px] w-[7px]" viewBox="0 0 7 10"><path d="M6 1L2 5l4 4" fill="none" stroke="#333" stroke-width="2"/></svg></button>
          <span class="h-full w-[55px] bg-[#cdcdcd]"></span>
          <button class="ml-auto flex w-5 justify-center" aria-label="Scroll right"><svg class="h-[10px] w-[7px]" viewBox="0 0 7 10"><path d="M1 1l4 4-4 4" fill="none" stroke="#333" stroke-width="2"/></svg></button>
        </div>
      </div>
      <div class="h-[5px] shrink-0 border border-t-0 border-[#b0b0b0] bg-[#dcdcdc]"></div>
      <div class="shrink-0 pb-1 text-[14px] leading-5 text-[#2b6a8a]">
        <button class="flex h-7 w-full items-center border-b-2 border-[#cfcfcf] pt-[3px] pl-[13px]"><svg class="mr-[10px] h-[9px] w-[5px]" viewBox="0 0 5 9"><path d="M0 0v9l5-4.500z" fill="#1a6380"/></svg>Search</button>
        <button class="flex h-7 w-full items-center border-b-2 border-[#cfcfcf] pt-[3px] pl-[13px]"><svg class="mr-[10px] h-[9px] w-[5px]" viewBox="0 0 5 9"><path d="M0 0v9l5-4.500z" fill="#1a6380"/></svg>Dependencies</button>
        <button class="flex h-7 w-full items-center border-b-2 border-[#cfcfcf] pt-[3px] pl-[13px]"><svg class="mr-[10px] h-[9px] w-[5px]" viewBox="0 0 5 9"><path d="M0 0v9l5-4.500z" fill="#1a6380"/></svg>Details</button>
      </div>
    </aside>

    <!-- Graphics window -->
    <section class="flex min-w-0 flex-1 flex-col border-l border-[#c8c8c8]">
      <div class="flex h-[28px] shrink-0 items-stretch border-b-2 border-[#0b5f83] text-[13px] whitespace-nowrap">
        <button class="flex items-center gap-1 pl-[6px]"><svg class="size-5" viewBox="0 0 19 19" fill="none" stroke="#444" stroke-width="1.300"><path d="M1 10l8.500-8.500L18 10M3.500 8v10H8v-6h3.500v6H16V8M3.500 6V2"/></svg>Welcome Page</button>
        <button class="ml-[33px] flex items-center gap-1"><svg class="size-[19px]"><use href="#part"/></svg>W4-ratchet stop.prt<svg class="ml-1 h-[14px] w-3"><use href="#sheet"/></svg></button>
        <div class="ml-[25px] flex items-center gap-1 bg-[#0a5f87] pr-[6px] pl-[7px] text-[#d8eef6]"><button class="flex items-center gap-1"><svg class="size-[18px]"><use href="#part"/></svg>model1.prt<svg class="ml-1 h-[14px] w-3"><use href="#sheet"/></svg></button>
          <button class="ml-1" aria-label="Close model1.prt"><svg class="size-[10px]" viewBox="0 0 10 10"><path d="M1 1l8 8M9 1L1 9" stroke="#fff" stroke-width="2.200"/></svg></button></div>
      </div>
      <svg class="min-h-0 w-full flex-1" viewBox="405 234 668 486" role="img" aria-label="Ratchet stop model">
        <defs>
          <linearGradient id="topSide" x1="0" x2="1"><stop offset="0" stop-color="#869193"/><stop offset="1" stop-color="#a3b0b3"/></linearGradient>
          <linearGradient id="lowSide" x1="0" y1="0" x2="1" y2="1"><stop offset="0" stop-color="#3f4748"/><stop offset=".6" stop-color="#5d6769"/><stop offset="1" stop-color="#474f51"/></linearGradient>
        </defs>
        <g stroke="#2c3436" stroke-linejoin="round">
          <path d="M475 456L547 374L584 385L513 467z" fill="#858f91"/>
          <path d="M547 374C606 341 664 321 727 321C765 321 800 330 836 341L767 345L584 385z" fill="url(#topSide)"/>
          <path d="M629 453C676 470 709 503 734 555C753 594 780 616 822 619L800 560L740 480z" fill="url(#lowSide)"/>
          <path d="M584 385C640 352 705 333 767 333C790 333 812 335 834 340C875 350 912 367 941 388C975 408 993 446 993 490C993 565 935 629 868 629C852 629 836 625 821 618C798 606 780 590 770 566C752 512 700 467 629 453C615 451 604 450 592 450C565 450 538 456 513 467z" fill="#adbabf"/>
          <path d="M734 555l36 11" fill="none"/>
        </g>
        <!-- datum coordinate system -->
        <g fill="none" stroke="#d3d8d9" stroke-width="1.400">
          <path d="M837 488L831 405M837 488L912 477M837 488l35 11M835 441l44-7 3 48M835 441l20 6 3 47M858 494l43-7-20-6"/>
        </g>
        <path d="M830 395l-2 18h5z" fill="#8d9192"/><path d="M923 476l-17-4 1 9z" fill="#e6e6e6" stroke="#999" stroke-width=".5"/><path d="M866 497l10-1 4 4-8 2z" fill="#7d3a3c"/>
        <g font-family="Liberation Sans, sans-serif" font-size="14" text-anchor="middle">
          <text x="830" y="391" fill="#cdd3d5">Z</text><text x="931" y="479" fill="#cdd3d5">Y</text><text x="882" y="506" fill="#a34b4e">X</text>
        </g>
        <!-- view triad -->
        <path d="M461 653l26-4 15 3-26 5zM461 653l1 30 14 5V657M476 688l26-5v-31" fill="#fff" stroke="#999"/>
        <path d="M481 653l-1-24" stroke="#1238c8" stroke-width="3"/><path d="M479 617l-4 13h8z" fill="#1238c8"/>
        <path d="M503 665l15-2" stroke="#2b9440" stroke-width="3"/><path d="M529 661l-12-3 1 9z" fill="#2b9440"/>
        <path d="M488 670l9 3" stroke="#b31f24" stroke-width="4"/><path d="M505 675l-11-5 0 8z" fill="#b31f24"/>
        <g font-family="Liberation Sans, sans-serif" font-size="13" text-anchor="middle">
          <text x="478" y="610" fill="#3f59d6">Z</text><text x="539" y="664" fill="#3b9a4c">Y</text><text x="509" y="681" fill="#c13a3e">X</text>
        </g>
      </svg>
    </section>

    <!-- Right toolbar -->
    <aside class="flex w-[42px] shrink-0 flex-col items-center border-l border-[#dcdcdc] pt-[10px]">
      <button class="h-[37px]" aria-label="Part family"><svg class="size-7" viewBox="0 0 28 28"><path d="M1 14l9-5 14 4v6l-10 5-13-4z" fill="#d5d5d5" stroke="#555" stroke-width="1.200"/><path d="M1 14l13 5v5" fill="none" stroke="#666"/><path d="M7 3v9c1 3 11 3 12 0V3z" fill="url(#orange)" stroke="#a85400" stroke-width=".8"/><ellipse cx="13" cy="3.200" rx="6" ry="2.600" fill="#ff9a35" stroke="#b85c00" stroke-width=".8"/><path d="M13.500 16.500h14v11h-14z" fill="#fff" stroke="#333"/><text x="15" y="25" font-size="8" font-weight="bold" fill="#222">P=</text></svg></button>
      <button class="h-[37px]" aria-label="Edit part"><svg class="size-7"><use href="#part"/></svg></button>
      <button class="h-[37px]" aria-label="Extrude"><svg class="size-7" viewBox="0 0 28 28"><path d="M1 9l13-7 13 7v11l-6 4-7-4-7 4-6-4z" fill="#d8d8d8" stroke="#555" stroke-width="1.300" stroke-linejoin="round"/><path d="M7 13l7-4v11l-7 4z" fill="#b4b4b4"/><path d="M14 10v10M7 13v11M21 13v11" stroke="#888"/><path d="M1 9l13-7 13 7-6 4-7-4-7 4z" fill="#eaf5f7" stroke="#2badc2" stroke-width="1.500" stroke-linejoin="round"/></svg></button>
      <button class="h-[37px]" aria-label="Chamfer"><svg class="size-7"><use href="#chamfer"/></svg></button>
      <button class="h-[37px]" aria-label="Trim Body"><svg class="size-7"><use href="#trim"/></svg></button>
      <button class="h-[37px]" aria-label="Edit Sketch"><svg class="size-7" viewBox="0 0 28 28" fill="none" stroke="#2badc2" stroke-width="1.300"><path d="M1 8C8 3 15 1 26 2M4 1v21h8M4 5l14 18"/><circle cx="14" cy="13" r="6"/><path d="M11 24l8-8c-1-4 2-7 5-6l-2 3 2 2 3-2c1 4-2 6-5 6l-8 8c-2 1-4-1-3-3z" fill="#fff" stroke="#444"/></svg></button>
      <button class="h-[37px]" aria-label="Line"><svg class="size-7" viewBox="0 0 28 28"><path d="M0 28L28 0" stroke="#2ba5ba" stroke-width="1.500"/></svg></button>
      <button class="h-[37px]" aria-label="Circle"><svg class="size-7" viewBox="0 0 28 28"><circle cx="14" cy="14" r="13.200" fill="none" stroke="#2ba5ba" stroke-width="1.500"/></svg></button>
      <button class="h-[37px]" aria-label="Rectangle"><svg class="size-7" viewBox="0 0 28 28"><path d="M.8 5h26.400v17.500H.8z" fill="none" stroke="#2ba5ba" stroke-width="1.500"/></svg></button>
      <button class="h-[37px]" aria-label="Profile"><svg class="size-7" viewBox="0 0 28 28"><path d="M2 0v8c0 12 8 18 18 18h7V16H15V5M11 9l4-4 4 4" fill="none" stroke="#2ba5ba" stroke-width="1.500"/></svg></button>
      <span class="mt-[7px] h-px w-[31px] bg-[#d5d5d5]"></span>
      <button class="my-[9px]" aria-label="Unite"><svg class="size-7"><use href="#unite"/></svg></button>
      <span class="h-px w-[31px] bg-[#d5d5d5]"></span>
    </aside>
  </main>
</div>

</body>
</html>
